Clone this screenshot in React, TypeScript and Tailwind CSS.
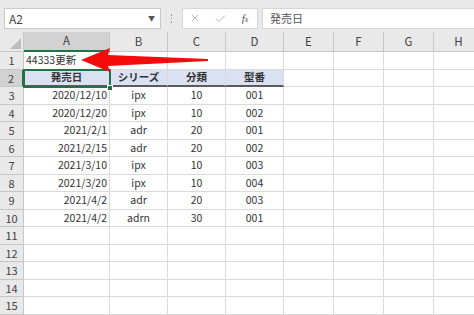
const cols = [
  { key: 'A', w: 'w-[86px]' },
  { key: 'B', w: 'w-[58px]' },
  { key: 'C', w: 'w-[58px]' },
  { key: 'D', w: 'w-[58px]' },
  { key: 'E', w: 'w-[50px]' },
  { key: 'F', w: 'w-[50px]' },
  { key: 'G', w: 'w-[50px]' },
  { key: 'H', w: 'w-[50px]' },
];

const data = [
  ['2020/12/10', 'ipx', '10', '001'],
  ['2020/12/20', 'ipx', '10', '002'],
  ['2021/2/1', 'adr', '20', '001'],
  ['2021/2/15', 'adr', '20', '002'],
  ['2021/3/10', 'ipx', '10', '003'],
  ['2021/3/20', 'ipx', '10', '004'],
  ['2021/4/2', 'adr', '20', '003'],
  ['2021/4/2', 'adrn', '30', '001'],
];

const heads = ['発売日', 'シリーズ', '分類', '型番'];

const Toolbar = () => (
  <div className="flex h-[32px] items-start bg-[#e9e9e9] pt-[8px] pl-[4px]">
    <div className="flex h-[21px] w-[157px] items-center justify-between border border-[#c9c9c9] bg-white pl-[4px] pr-[5px] text-[12px] text-[#444]">
      <span>A2</span>
      <span className="text-[7px] text-[#555]">▼</span>
    </div>
    <div className="flex h-[21px] w-[21px] flex-col items-center justify-center gap-[2px]">
      <span className="h-[1.5px] w-[1.5px] bg-[#9a9a9a]" />
      <span className="h-[1.5px] w-[1.5px] bg-[#9a9a9a]" />
      <span className="h-[1.5px] w-[1.5px] bg-[#9a9a9a]" />
    </div>
    <div className="flex h-[21px] w-[76px] items-center border border-[#d6d6d6] bg-white text-[#b5b5b5]">
      <svg width="25" height="21" viewBox="0 0 25 21" className="shrink-0">
        <path d="M9 7l6 6M15 7l-6 6" stroke="#b8b8b8" strokeWidth="1" fill="none" />
      </svg>
      <svg width="25" height="21" viewBox="0 0 25 21" className="shrink-0">
        <path d="M8 10.5l3 3 6-6" stroke="#b8b8b8" strokeWidth="1" fill="none" />
      </svg>
      <span className="w-[24px] text-center font-['Liberation_Serif',serif] text-[11px] italic text-[#555]">
        f<span className="text-[8px]">x</span>
      </span>
    </div>
    <div className="ml-[4px] flex h-[21px] flex-1 items-center border border-r-0 border-[#d6d6d6] bg-white pl-[7px] text-[11px] text-[#555]">
      発売日
    </div>
  </div>
);

const HeaderRow = () => (
  <div className="flex h-[20px]">
    <div className="relative w-[24px] shrink-0 border-r border-b border-[#c6c6c6] bg-[#e9e9e9]">
      <div className="absolute right-[2px] bottom-[2px] h-0 w-0 border-t-[11px] border-l-[11px] border-t-transparent border-l-transparent border-b-0 border-r-[11px] border-r-[#bdbdbd]" />
    </div>
    {cols.map((c) => (
      <div
        key={c.key}
        className={`${c.w} flex shrink-0 items-center justify-center border-r border-[#c6c6c6] text-[11.5px] text-[#444] ${
          c.key === 'A' ? 'border-b-2 border-b-[#217346] bg-[#d2d2d2]' : 'border-b border-b-[#c6c6c6] bg-[#e9e9e9]'
        }`}
      >
        {c.key}
      </div>
    ))}
  </div>
);

const rowCells = (r: number): { text: string; align: string; cls?: string }[] => {
  if (r === 1) return [{ text: '44333更新', align: 'justify-start pl-[2px]' }];
  if (r === 2)
    return heads.map((h) => ({
      text: h,
      align: 'justify-center',
      cls: 'bg-[#d9e1f2] font-bold text-[#111] border-b-2 border-b-[#5b5b5b]',
    }));
  const d = data[r - 3];
  if (!d) return [];
  return [
    { text: d[0], align: 'justify-end pr-[2px]' },
    { text: d[1], align: 'justify-center' },
    { text: d[2], align: 'justify-center' },
    { text: d[3], align: 'justify-center' },
  ];
};

const Row = ({ r }: { r: number }) => {
  const cells = rowCells(r);
  return (
    <div className={`flex ${r % 2 === 1 ? 'h-[18px]' : 'h-[17px]'}`}>
      <div
        className={`flex w-[24px] shrink-0 items-center justify-center border-b border-[#c6c6c6] text-[11px] text-[#444] ${
          r === 2 ? 'border-r-2 border-r-[#217346] bg-[#d2d2d2]' : 'border-r border-r-[#c6c6c6] bg-[#e9e9e9]'
        }`}
      >
        {r}
      </div>
      {cols.map((c, i) => {
        const cell = cells[i];
        return (
          <div
            key={c.key}
            className={`${c.w} flex shrink-0 items-center overflow-visible whitespace-nowrap border-r border-[#dadada] text-[10.5px] text-[#333] ${
              cell?.cls ?? 'border-b border-b-[#dadada]'
            } ${cell?.align ?? ''}`}
          >
            {cell?.text}
          </div>
        );
      })}
    </div>
  );
};

export default function App() {
  return (
    <div className="relative h-[315px] w-[474px] overflow-hidden bg-white font-['Noto_Sans_CJK_JP',sans-serif] leading-none">
      <Toolbar />
      <HeaderRow />
      {Array.from({ length: 15 }, (_, i) => (
        <Row key={i} r={i + 1} />
      ))}

      {/* selection A2 */}
      <div className="pointer-events-none absolute top-[69px] left-[23px] h-[19px] w-[88px] border-2 border-[#217346]" />
      <div className="pointer-events-none absolute top-[85px] left-[107px] h-[6px] w-[6px] border border-white bg-[#217346]" />

      {/* red arrow */}
      <svg className="pointer-events-none absolute top-0 left-0" width="474" height="315" viewBox="0 0 474 315">
        <polygon points="81,60 110,48 108,55 208,59 208,61 108,66 110,72" fill="#f20c0c" />
      </svg>
    </div>
  );
}
